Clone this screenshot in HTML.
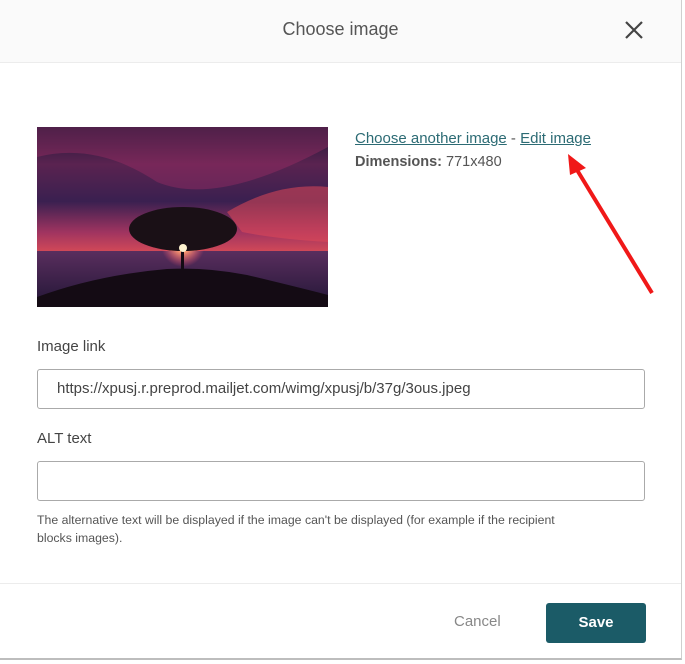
<!DOCTYPE html>
<html><head><meta charset="utf-8"><style>
html,body{margin:0;padding:0;width:685px;height:664px;background:#fff;overflow:hidden;font-family:"Liberation Sans",sans-serif;}
.frame{position:absolute;left:0;top:0;width:682px;height:660px;border-right:1px solid #cfcfcf;border-bottom:2px solid #bdbdbd;box-sizing:border-box;}
.hdr{position:absolute;left:0;top:0;width:681px;height:62px;background:#fafafa;border-bottom:1px solid #ececec;}
.hdr .t{position:absolute;left:0;right:0;top:19px;text-align:center;font-size:18px;color:#555;}
.x{position:absolute;left:624px;top:20px;}
.lbl{position:absolute;left:37px;font-size:15px;color:#444;}
.inp{position:absolute;left:37px;width:608px;height:40px;border:1px solid #aaa;border-radius:3px;box-sizing:border-box;font-size:15px;color:#444;padding:10px 0 0 19px;}
a{color:#2c6b74;text-decoration:underline;}
</style></head><body>
<div class="frame"></div>
<div class="hdr"><div class="t">Choose image</div>
<svg class="x" width="20" height="20" viewBox="0 0 20 20"><path d="M2 2L18 18M18 2L2 18" stroke="#444" stroke-width="2.2"/></svg></div>

<svg style="position:absolute;left:37px;top:127px" width="291" height="180" viewBox="0 0 291 180">
<defs>
<linearGradient id="sky" x1="0" y1="0" x2="0" y2="1">
<stop offset="0" stop-color="#1c1838"/><stop offset="0.3" stop-color="#5a2350"/><stop offset="0.6" stop-color="#3a2050"/><stop offset="0.85" stop-color="#a03460"/><stop offset="1" stop-color="#d04858"/></linearGradient>
<linearGradient id="sea" x1="0" y1="0" x2="0" y2="1"><stop offset="0" stop-color="#5a2e5e"/><stop offset="1" stop-color="#221636"/></linearGradient>
<radialGradient id="sun" cx="0.5" cy="0.5" r="0.5"><stop offset="0" stop-color="#fff"/><stop offset="0.3" stop-color="#ffa070"/><stop offset="1" stop-color="#ff5070" stop-opacity="0"/></radialGradient>
</defs>
<rect width="291" height="124" fill="url(#sky)"/>
<path d="M0 30 Q60 15 120 55 Q180 80 291 20 L291 0 L0 0Z" fill="#b0306a" opacity=".35"/>
<path d="M190 85 Q240 55 291 60 L291 115 Q240 112 205 105Z" fill="#e04858" opacity=".55"/>
<rect y="124" width="291" height="56" fill="url(#sea)"/>
<circle cx="146" cy="118" r="22" fill="url(#sun)"/>
<path d="M0 180 L0 170 Q60 148 130 142 Q170 140 210 148 Q260 160 291 168 L291 180Z" fill="#140b14"/>
<rect x="144" y="110" width="3" height="33" fill="#140b14"/>
<ellipse cx="146" cy="102" rx="54" ry="22" fill="#1a1016"/>
<circle cx="146" cy="121" r="4" fill="#fff3d0"/>
</svg>

<div style="position:absolute;left:355px;top:130px;font-size:15px;color:#555;"><a>Choose another image</a> - <a>Edit image</a></div>
<div style="position:absolute;left:355px;top:154px;font-size:14.5px;color:#555;"><b>Dimensions:</b> 771x480</div>

<svg style="position:absolute;left:560px;top:145px" width="100" height="155"><path d="M92 148L14 20" stroke="#f01818" stroke-width="4"/><path d="M8 9L26 23L10 30Z" fill="#f01818"/></svg>

<div class="lbl" style="top:338px">Image link</div>
<div class="inp" style="top:369px">https://xpusj.r.preprod.mailjet.com/wimg/xpusj/b/37g/3ous.jpeg</div>
<div class="lbl" style="top:430px">ALT text</div>
<div class="inp" style="top:461px"></div>
<div style="position:absolute;left:37px;top:511px;font-size:12.3px;color:#555;line-height:18px;width:545px;">The alternative text will be displayed if the image can't be displayed (for example if the recipient blocks images).</div>

<div style="position:absolute;left:0;top:583px;width:681px;border-top:1px solid #ececec;"></div>
<div style="position:absolute;left:454px;top:613px;font-size:15px;color:#888;">Cancel</div>
<div style="position:absolute;left:546px;top:603px;width:100px;height:40px;background:#1b5b67;border-radius:3px;color:#fff;font-weight:bold;font-size:15px;text-align:center;line-height:40px;">Save</div>
</body></html>
